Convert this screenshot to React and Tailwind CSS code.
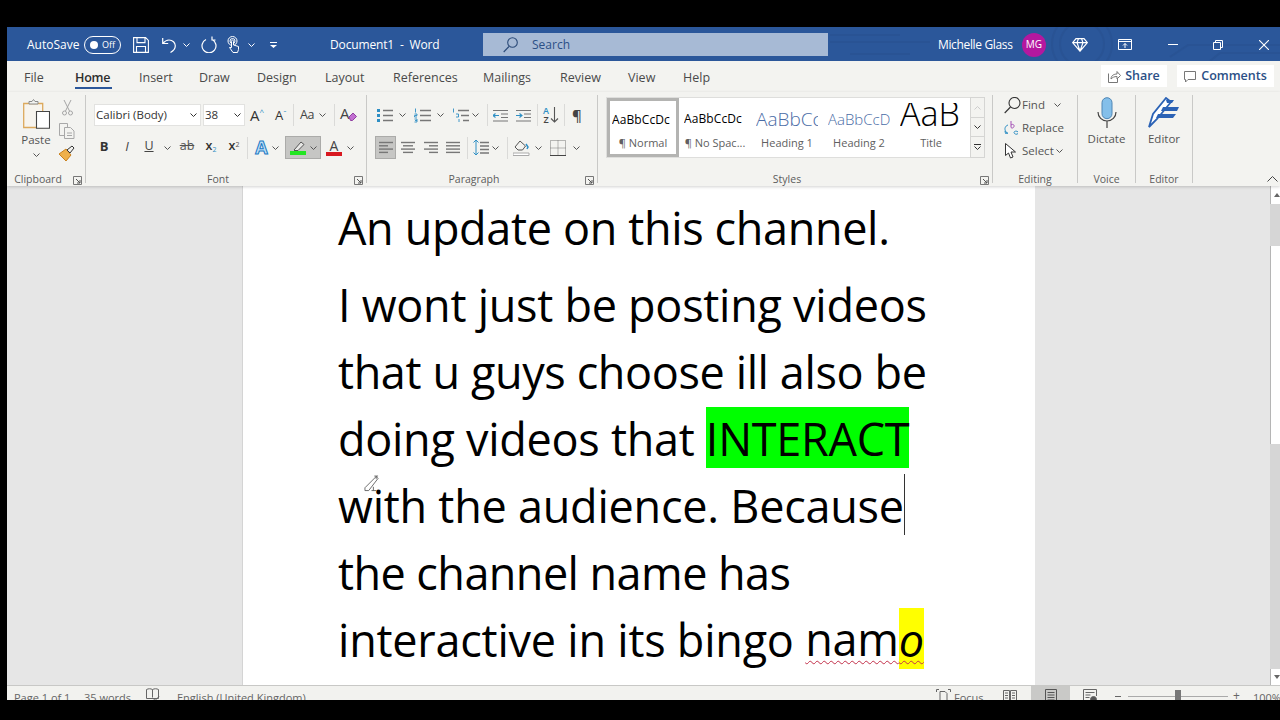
import React from 'react';

const Chev = ({ c = '#555', className = '' }) => (
  <svg width="7" height="4" viewBox="0 0 7 4" className={'shrink-0 ' + className}><path d="M.5.5 3.5 3.5 6.5.5" fill="none" stroke={c} /></svg>
);
const Sep = ({ className = '' }) => <div className={'w-px h-[22px] bg-[#dadad8] shrink-0 ' + className} />;
const Launcher = () => (
  <svg width="9" height="9" viewBox="0 0 9 9"><path d="M.5 8.5v-8h8v8z" fill="none" stroke="#777" /><path d="M3 3l4 4M7 4v3H4" fill="none" stroke="#555" /></svg>
);
const Lines = ({ rows, w = 14, c = '#777' }) => (
  <svg width={w} height="15" viewBox={`0 0 ${w} 15`} className="shrink-0">
    {rows.map(([a, b], i) => <path key={i} d={`M${a} ${2.5 + i * 3.3}H${b}`} stroke={c} strokeWidth="1.4" />)}
  </svg>
);
const Bullets = () => (
  <svg width="16" height="15" viewBox="0 0 16 15" className="shrink-0">
    <path d="M6 2.5h10M6 7.5h10M6 12.5h10" stroke="#777" strokeWidth="1.3" />
    <path d="M0 1h3v3H0zM0 6h3v3H0zM0 11h3v3H0z" fill="#2f8fc4" />
  </svg>
);
const Numbers = () => (
  <svg width="17" height="15" viewBox="0 0 17 15" className="shrink-0">
    <path d="M6 2.5h11M6 7.5h11M6 12.5h11" stroke="#777" strokeWidth="1.3" />
    <path d="M1.5 0.500v4M0.500 6h2.500v1.500h-2.500v1.500h2.500M0.500 11h2.500v3h-2.500M1 12.500h2" fill="none" stroke="#2f8fc4" strokeWidth=".9" />
  </svg>
);
const Multi = () => (
  <svg width="17" height="15" viewBox="0 0 17 15" className="shrink-0">
    <path d="M6 2.500h11M9 7.500h8M11 12.500h6" stroke="#777" strokeWidth="1.3" />
    <path d="M1.500.5v4M4 6h2.500v3H4M7 11v3" fill="none" stroke="#2f8fc4" strokeWidth=".9" />
  </svg>
);
const Indent = ({ flip }) => (
  <svg width="15" height="15" viewBox="0 0 15 15" className="shrink-0">
    <path d="M0 2.500h15M8 6h7M8 9.500h7M0 13h15" stroke="#777" strokeWidth="1.2" />
    <path d={flip ? 'M0 7.500h6M3.500 5.500l2.500 2-2.500 2' : 'M6 7.500H0M2.500 5.500l-2.500 2 2.500 2'} fill="none" stroke="#2f8fc4" strokeWidth="1.1" />
  </svg>
);

function TitleBar() {
  return (
    <div className="relative h-[34px] shrink-0 bg-[#2b579a] flex items-center pt-[1px] text-white text-[12px] overflow-hidden">
      <svg width="450" height="34" viewBox="0 0 450 34" className="absolute right-0 top-0" fill="none" stroke="#295394" strokeWidth="2">
        <path d="M0 15h100M0 8h70M20 27h60" />
        <circle cx="252" cy="17" r="22" />
        <circle cx="252" cy="17" r="30" />
        <path d="M340 30l18-12h92M380 34l10-8h60" />
      </svg>
      <span className="relative ml-[20px] w-[57px]">AutoSave</span>
      <div className="relative w-[37px] h-[18px] rounded-full border border-white flex items-center pl-[5px] gap-[4px] shrink-0">
        <span className="w-[8px] h-[8px] rounded-full bg-white shrink-0" />
        <span className="text-[9px] leading-none">Off</span>
      </div>
      <svg width="16" height="16" viewBox="0 0 16 16" className="relative ml-[12px] shrink-0" fill="none" stroke="#fff" strokeWidth="1.1">
        <path d="M.6.6h12l2.800 2.800v12H.6zM4 .6v5h8v-5M3.500 15.400V9.500h9v5.900" />
      </svg>
      <svg width="14" height="16" viewBox="0 0 14 16" className="relative ml-[13px] shrink-0" fill="none" stroke="#fff" strokeWidth="1.2">
        <path d="M.7 1v5.500h5.500M.9 6.300C3 3.800 5 3 7 3c3.700 0 6.300 2.800 6.300 5.800 0 2.700-1.700 5-4.800 6.700" />
      </svg>
      <Chev c="#fff" className="relative ml-[7px]" />
      <svg width="16" height="17" viewBox="0 0 16 17" className="relative ml-[11px] shrink-0" fill="none" stroke="#fff" strokeWidth="1.2">
        <path d="M5 3.500A7 7 0 1 0 11 3.500M11 .5v3.500h3.500" />
      </svg>
      <svg width="14" height="17" viewBox="0 0 14 17" className="relative ml-[10px] shrink-0" fill="none" stroke="#fff" strokeWidth="1">
        <circle cx="5.500" cy="5" r="4.500" />
        <circle cx="5.500" cy="5" r="2.500" />
        <path d="M4.500 5.500c0-2 2-2 2 0v3.500l5 1.500v3l-1 3H6L2.500 11.500l2 0z" fill="#2b579a" />
      </svg>
      <Chev c="#fff" className="relative ml-[7px]" />
      <svg width="7" height="6" viewBox="0 0 7 6" className="relative ml-[15px] shrink-0" fill="#fff"><path d="M0 0h7v1H0zM0 3h7L3.500 6z" /></svg>
      <span className="relative ml-[53px] w-[153px] whitespace-pre text-[12px] tracking-[-0.15px]">Document1  -  Word</span>
      <div className="relative w-[345px] h-[23px] bg-[#a7bad5] flex items-center shrink-0 text-[#2b4f86]">
        <svg width="15" height="16" viewBox="0 0 15 16" className="ml-[20px]" fill="none" stroke="#2b4a78" strokeWidth="1.1"><circle cx="9.500" cy="5.500" r="4.800" /><path d="M6 9.500.7 15" /></svg>
        <span className="ml-[14px] text-[12px]">Search</span>
      </div>
      <span className="relative ml-[110px] w-[73px] whitespace-nowrap text-[12px] tracking-[-0.35px]">Michelle Glass</span>
      <div className="relative ml-[11px] w-[24px] h-[24px] rounded-full bg-[#b4189f] flex items-center justify-center text-[10px] shrink-0">MG</div>
      <svg width="16" height="14" viewBox="0 0 16 14" className="relative ml-[26px] shrink-0" fill="none" stroke="#fff" strokeWidth="1.200"><path d="M4 .6h8l3.400 4L8 13.200.6 4.600zM.6 4.600h14.800M5 4.600 8 13l3-8.400M5 4.600 6.500.6M11 4.600 9.500.6" /></svg>
      <svg width="14" height="11" viewBox="0 0 14 11" className="relative ml-[30px] shrink-0" fill="none" stroke="#fff"><path d="M.5.500h13v10H.5zM.5 2.500h13M7 9V4.500M5 6.500l2-2 2 2" /></svg>
      <div className="relative ml-[36px] w-[10px] h-px bg-white shrink-0" />
      <svg width="10" height="10" viewBox="0 0 10 10" className="relative ml-[35px] shrink-0" fill="none" stroke="#fff"><path d="M.5 2.500h7v7h-7zM2.500 2.500v-2h7v7h-2" /></svg>
      <svg width="10" height="10" viewBox="0 0 10 10" className="relative ml-[36px] shrink-0" fill="none" stroke="#fff" strokeWidth="1.100"><path d="M0 0l10 10M10 0 0 10" /></svg>
    </div>
  );
}

function Tabs() {
  const t = 'text-[12.5px] leading-[18px] text-[#4a4a4a] shrink-0';
  return (
    <div className="h-[31px] shrink-0 bg-[#f3f3f0] flex items-start pl-[17px] pt-[8px]">
      <span className={t + ' w-[51px]'}>File</span>
      <span className={t + ' w-[64px]'}><span className="inline-block w-[37px] border-b-2 border-[#2b579a] text-[#2d2d2d] font-semibold text-[12.5px] tracking-[-0.2px]">Home</span></span>
      <span className={t + ' w-[60px]'}>Insert</span>
      <span className={t + ' w-[58px]'}>Draw</span>
      <span className={t + ' w-[68px]'}>Design</span>
      <span className={t + ' w-[68px]'}>Layout</span>
      <span className={t + ' w-[90px]'}>References</span>
      <span className={t + ' w-[77px]'}>Mailings</span>
      <span className={t + ' w-[68px]'}>Review</span>
      <span className={t + ' w-[55px]'}>View</span>
      <span className={t}>Help</span>
      <div className="ml-auto -mt-[4px] pt-[1px] h-[22px] w-[66px] bg-white flex items-center justify-center gap-[4px] text-[#2b4f86] text-[12.5px] font-semibold shrink-0">
        <svg width="13" height="13" viewBox="0 0 13 13" fill="none" stroke="#777"><path d="M.5 3.500v9h9v-4M3 9c0-3.500 3-5 6-5V1.500L12.500 5.500 9 9V6.500c-3 0-4.500 1-6 2.500z" /></svg>
        Share
      </div>
      <div className="ml-[10px] mr-[6px] -mt-[4px] pt-[1px] h-[22px] w-[97px] bg-white flex items-center justify-center gap-[5px] text-[#2b4f86] text-[12.5px] font-semibold shrink-0">
        <svg width="12" height="12" viewBox="0 0 12 12" fill="none" stroke="#777"><path d="M.5.500h11v8H4L1.500 11V8.500h-1z" /></svg>
        Comments
      </div>
    </div>
  );
}

function Group({ label, launcher, className = '', children }) {
  return (
    <div className={'h-[88px] shrink-0 border-r border-[#c9c9c7] ' + className}>
      <div className="h-[76px] flow-root">{children}</div>
      <div className="h-[18px] flex items-center text-[10.5px] text-[#5c5c5c]">
        <div className="flex-1 text-center">{label}</div>
        {launcher && <div className="w-[16px] flex justify-center"><Launcher /></div>}
      </div>
    </div>
  );
}

function Clipboard() {
  return (
    <Group label="Clipboard" launcher className="w-[79px]">
      <div className="flex pl-[6px]">
        <div className="w-[46px] flex flex-col items-center pt-[4px]">
          <svg width="27" height="30" viewBox="0 0 27 30">
            <path d="M.7 4.500h19v24H.7z" fill="#f7f4ee" stroke="#dca95c" strokeWidth="1.300" />
            <path d="M6 5V2.500h3l1.500-2 1.500 2h3V5z" fill="#f3f3f0" stroke="#8a8a8a" />
            <path d="M13.500 12.500h13v16.800h-13z" fill="#fff" stroke="#444" strokeWidth="1.100" />
          </svg>
          <span className="mt-[3px] text-[11.5px] leading-[16px] text-[#555]">Paste</span>
          <Chev className="mt-[5px]" />
        </div>
        <div className="w-[16px] flex flex-col items-center pt-[5px]">
          <svg width="11" height="16" viewBox="0 0 11 16" fill="none" stroke="#a5a5a5"><path d="M2 0l5.500 11M9 0 3.500 11" /><circle cx="2.500" cy="13" r="2" /><circle cx="8.500" cy="13" r="2" /></svg>
          <svg width="16" height="16" viewBox="0 0 16 16" className="mt-[7px]" fill="none" stroke="#a8a8a8"><path d="M.5.5h8v12h-8z" /><path d="M5.500 4.500h6l3.500 3.500v7.500H5.500z" fill="#f3f3f0" /><path d="M8 10h5M8 12.500h5" /></svg>
          <svg width="16" height="17" viewBox="0 0 16 17" className="mt-[6px]">
            <path d="M0 9l7-5 5 6-5 6z" fill="#efb04a" stroke="#c9801d" />
            <path d="M8 5l5-4 2 2-4 5z" fill="#f3f3f0" stroke="#333" />
          </svg>
        </div>
      </div>
    </Group>
  );
}

function Font() {
  return (
    <Group label="Font" launcher className="w-[281px]">
      <div className="flex items-center h-[22px] mt-[9px] pl-[8px]">
        <div className="w-[107px] h-[22px] bg-white border border-[#e2e2e0] flex items-center justify-between pl-[1px] pr-[3px] shrink-0 text-[11.5px] text-[#333]">
          Calibri (Body)<Chev c="#333" />
        </div>
        <div className="ml-[2px] w-[42px] h-[22px] bg-white border border-[#e2e2e0] flex items-center justify-between pl-[1px] pr-[3px] shrink-0 text-[11.5px] text-[#333]">
          38<Chev c="#333" />
        </div>
        <div className="ml-[5px] w-[16px] shrink-0 flex items-start text-[15px] leading-none text-[#333]">A<span className="text-[#2f8fc4] text-[8px]">^</span></div>
        <div className="ml-[9px] w-[16px] shrink-0 flex items-start text-[13px] leading-none text-[#333]">A<span className="text-[#2f8fc4] text-[8px]">ˇ</span></div>
        <Sep className="ml-[2px]" />
        <span className="ml-[6px] w-[15px] shrink-0 text-[12.500px] text-[#444] whitespace-nowrap tracking-[-0.5px]">Aa</span>
        <Chev className="ml-[4px]" />
        <Sep className="ml-[8px]" />
        <div className="ml-[5px] w-[17px] h-[18px] shrink-0 flex flex-col">
          <span className="text-[15px] leading-[15px] text-[#444]">A</span>
          <svg width="17" height="18" viewBox="0 0 17 18" className="-mt-[15px]"><path d="M9 11l4-4 3.500 3.500-4 4h-2z" fill="#c26fd1" stroke="#8f3fa0" /></svg>
        </div>
      </div>
      <div className="flex items-center h-[23px] mt-[10px] pl-[8px]">
        <span className="w-[20px] mb-[2px] shrink-0 text-center text-[13px] font-bold text-[#333]">B</span>
        <span className="ml-[3px] mb-[2px] w-[20px] shrink-0 text-center text-[13px] italic text-[#444]">I</span>
        <span className="ml-[2px] mb-[2px] w-[20px] shrink-0 text-center text-[12.500px] underline text-[#444]">U</span>
        <Chev className="ml-[5px]" />
        <span className="ml-[6px] mb-[2px] w-[20px] shrink-0 text-center text-[12.500px] line-through text-[#555]">ab</span>
        <span className="ml-[4px] mb-[2px] w-[20px] shrink-0 text-center text-[12.500px] font-semibold text-[#333] whitespace-nowrap">x<sub className="text-[7px] text-[#2f8fc4] font-normal">2</sub></span>
        <span className="ml-[3px] mb-[2px] w-[20px] shrink-0 text-center text-[12.500px] font-semibold text-[#333] whitespace-nowrap">x<sup className="text-[7px] text-[#555] font-normal">2</sup></span>
        <Sep className="ml-[3px]" />
        <span className="ml-[5px] mb-[2px] w-[17px] shrink-0 text-center text-[18px] leading-none font-bold text-[#bfe1f7] [-webkit-text-stroke:1px_#2179c4]">A</span>
        <Chev className="ml-[2px]" />
        <div className="ml-[6px] w-[36px] h-[23px] bg-[#c6c6c4] border border-[#ababa9] flex items-center shrink-0">
          <div className="ml-[4px] w-[16px] flex flex-col items-center">
            <svg width="14" height="11" viewBox="0 0 14 11"><path d="M3 10 10 2l3 2.500-6 6H3" fill="#e8e8e6" stroke="#555" /></svg>
            <div className="w-[16px] h-[4px] bg-[#22e622]" />
          </div>
          <Chev className="ml-[4px]" />
        </div>
        <div className="ml-[5px] w-[16px] shrink-0 flex flex-col items-center">
          <span className="text-[14px] leading-[13px] text-[#444]">A</span>
          <div className="w-[16px] h-[4px] bg-[#d81820]" />
        </div>
        <Chev className="ml-[5px]" />
      </div>
    </Group>
  );
}

function Paragraph() {
  const L = [[0, 14], [0, 9], [0, 14], [0, 9]];
  const C = [[0, 14], [2, 12], [0, 14], [2, 12]];
  const R = [[0, 14], [5, 14], [0, 14], [5, 14]];
  const J = [[0, 14], [0, 14], [0, 14], [0, 14]];
  return (
    <Group label="Paragraph" launcher className="w-[231px]">
      <div className="flex items-center h-[22px] mt-[9px] pl-[10px]">
        <Bullets /><Chev className="ml-[6px]" />
        <div className="ml-[8px] shrink-0"><Numbers /></div><Chev className="ml-[6px]" />
        <div className="ml-[8px] shrink-0"><Multi /></div><Chev className="ml-[3px]" />
        <Sep className="ml-[8px]" />
        <div className="ml-[5px] shrink-0"><Indent /></div>
        <div className="ml-[8px] shrink-0"><Indent flip /></div>
        <Sep className="ml-[6px]" />
        <div className="ml-[4px] w-[17px] shrink-0 flex items-center">
          <span className="text-[9px] leading-[9px] font-semibold w-[8px] text-center"><span className="text-[#2f8fc4]">A</span><br /><span className="text-[#444]">Z</span></span>
          <svg width="9" height="16" viewBox="0 0 9 16" fill="none" stroke="#555" strokeWidth="1.100"><path d="M4.500 0v15M1 11.500l3.500 3.500 3.500-3.500" /></svg>
        </div>
        <Sep className="ml-[5px]" />
        <span className="ml-[7px] w-[12px] shrink-0 text-[15px] leading-none text-[#444] font-semibold">¶</span>
      </div>
      <div className="flex items-center h-[23px] mt-[10px] pl-[8px]">
        <div className="w-[21px] h-[23px] bg-[#c6c6c4] border border-[#ababa9] flex items-center justify-center shrink-0"><Lines rows={L} /></div>
        <div className="ml-[5px] shrink-0"><Lines rows={C} /></div>
        <div className="ml-[9px] shrink-0"><Lines rows={R} /></div>
        <div className="ml-[8px] shrink-0"><Lines rows={J} /></div>
        <Sep className="ml-[7px]" />
        <svg width="16" height="15" viewBox="0 0 16 15" className="ml-[5px] shrink-0" fill="none">
          <path d="M7 2.500h9M7 6h9M7 9.500h9M7 13h9" stroke="#777" strokeWidth="1.300" />
          <path d="M3 0v15M.5 2.500 3 0l2.500 2.500M.5 12.500 3 15l2.500-2.500" stroke="#2f8fc4" />
        </svg>
        <Chev className="ml-[3px]" />
        <Sep className="ml-[8px]" />
        <svg width="17" height="16" viewBox="0 0 17 16" className="ml-[5px] shrink-0" fill="none">
          <path d="M2 7 7 1l5.500 5-3 4H5z" stroke="#555" />
          <path d="M13 4l2 3-1 2" stroke="#2f8fc4" strokeWidth="1.500" />
          <path d="M0 13h16v2.500H0z" fill="#fff" stroke="#aaa" />
        </svg>
        <Chev className="ml-[5px]" />
        <svg width="16" height="16" viewBox="0 0 16 16" className="ml-[8px] shrink-0" fill="none" stroke="#777" strokeDasharray="1 1">
          <path d="M.5.5h15v15H.5zM8 .5v15M.5 8h15" />
          <path d="M0 15.500h16" stroke="#444" strokeDasharray="none" />
        </svg>
        <Chev className="ml-[7px]" />
      </div>
    </Group>
  );
}

function StyleCell({ children, label, selected, labelClass = '' }) {
  return (
    <div className={'w-[72px] shrink-0 flex flex-col items-center ' + (selected ? 'h-[59px] border-[3px] border-[#b4b4b2]' : 'h-[57px]')}>
      <div className={'w-[62px] overflow-hidden flex items-center whitespace-nowrap ' + (selected ? 'mt-[2px] h-[33px]' : 'mt-[4px] h-[34px]')}>{children}</div>
      <span className={'text-[11px] leading-[14px] text-[#606060] whitespace-nowrap ' + labelClass}>{label}</span>
    </div>
  );
}

function Styles() {
  return (
    <Group label="Styles" launcher className="w-[395px]">
      <div className="flex pl-[8px] pt-[2px]">
        <div className="w-[363px] h-[59px] bg-white border-y border-l border-[#dededc] flex items-start shrink-0 box-content">
          <StyleCell selected label="¶ Normal"><span className="text-[12px] text-black tracking-[0.1px]">AaBbCcDc</span></StyleCell>
          <StyleCell label="¶ No Spac..."><span className="text-[12px] text-black tracking-[0.1px]">AaBbCcDc</span></StyleCell>
          <StyleCell label="Heading 1"><span className="text-[19px] font-light text-[#4a6ca6]">AaBbCc</span></StyleCell>
          <StyleCell label="Heading 2"><span className="text-[15px] font-light text-[#4a6ca6]">AaBbCcD</span></StyleCell>
          <div className="w-[72px] shrink-0 h-[57px] flex flex-col items-center">
            <div className="mt-[5px] h-[25px] w-[62px] overflow-hidden">
              <div className="-mt-[11px] text-[34px] leading-[42px] font-light text-black whitespace-nowrap">AaB</div>
            </div>
            <span className="text-[11px] leading-[14px] text-[#606060] mt-[8px]">Title</span>
          </div>
        </div>
        <div className="w-[15px] h-[61px] flex flex-col border border-[#d5d5d3] shrink-0">
          <div className="h-[20px] flex items-center justify-center border-b border-[#d5d5d3]"><Chev c="#ccc" className="rotate-180" /></div>
          <div className="h-[19px] flex items-center justify-center border-b border-[#d5d5d3]"><Chev c="#333" /></div>
          <div className="flex-1 flex flex-col items-center justify-center gap-[1px]"><div className="w-[7px] h-px bg-[#333]" /><Chev c="#333" /></div>
        </div>
      </div>
    </Group>
  );
}

function Editing() {
  const t = 'text-[11.500px] text-[#555] leading-none';
  return (
    <Group label="Editing" className="w-[85px]">
      <div className="flex items-center h-[20px] pl-[11px]">
        <svg width="17" height="17" viewBox="0 0 17 17" className="shrink-0" fill="none" stroke="#333" strokeWidth="1.100"><circle cx="10.500" cy="6" r="5.500" /><path d="M6.500 10 .7 16" /></svg>
        <span className={t + ' ml-[1px] w-[32px]'}>Find</span><Chev />
      </div>
      <div className="flex items-center h-[22px] mt-[2px] pl-[10px]">
        <div className="w-[16px] h-[18px] shrink-0 flex items-center">
          <svg width="16" height="16" viewBox="0 0 16 16" fill="none"><path d="M5 5C2 6 1 9 3 12l2 1.500M2 11l.5 2.500L5 13" stroke="#2f8fc4" /><path d="M8 1v6.500M8 5c2-1.500 3.500 0 3 1.500s-2 2-3 1" stroke="#a34fb5" /><path d="M15 12c-1-1.500-4-1-4 .5s3 2.500 4 1" stroke="#2f8fc4" /></svg>
        </div>
        <span className={t + ' ml-[3px]'}>Replace</span>
      </div>
      <div className="flex items-center h-[22px] mt-[1px] pl-[12px]">
        <svg width="12" height="16" viewBox="0 0 12 16" className="shrink-0" fill="#fff" stroke="#333"><path d="M.5.500v12l3-2.500 2 5 2.500-1-2-5h4.500z" /></svg>
        <span className={t + ' ml-[5px] w-[34px]'}>Select</span><Chev />
      </div>
    </Group>
  );
}

function Big({ label, text, icon, w }) {
  return (
    <Group label={label} className={w}>
      <div className="flex flex-col items-center pt-[2px]">
        {icon}
        <span className="mt-[3px] text-[11.500px] leading-[16px] text-[#555]">{text}</span>
      </div>
    </Group>
  );
}

function Ribbon() {
  return (
    <div className="relative z-10 h-[94px] shrink-0 bg-[#f3f3f0] flex pt-[3px] shadow-[0_1px_3px_rgba(0,0,0,0.18)]">
      <Clipboard />
      <Font />
      <Paragraph />
      <Styles />
      <Editing />
      <Big label="Voice" text="Dictate" w="w-[58px]" icon={
        <svg width="20" height="31" viewBox="0 0 20 31" fill="none">
          <rect x="5" y=".7" width="10" height="21" rx="5" fill="#84bfea" stroke="#4f86b5" />
          <path d="M1 15c0 5 4 9 9 9s9-4 9-9M10 24v7" stroke="#444" strokeWidth="1.200" />
        </svg>
      } />
      <Big label="Editor" text="Editor" w="w-[57px]" icon={
        <svg width="32" height="31" viewBox="0 0 32 31" fill="none">
          <path d="M1 30 5 17 18 1l5 4-14 17z" fill="#fff" stroke="#2b62b5" strokeWidth="1.800" />
          <path d="M15 10h16l-2 4H13zM10 17h18l-3 4H8zM18 3h8l-2 3h-5z" fill="#2b62b5" />
        </svg>
      } />
      <div className="flex-1 h-[88px] flex items-end justify-end pr-[2px] pb-[1px]">
        <svg width="11" height="6" viewBox="0 0 11 6" fill="none" stroke="#444"><path d="M.5 5.500l5-5 5 5" /></svg>
      </div>
    </div>
  );
}

const T = ({ children }) => <span className="relative top-[1px]">{children}</span>;

function Doc() {
  const line = 'block whitespace-nowrap h-[67px]';
  return (
    <div className="h-[499px] shrink-0 flex bg-[#e6e6e6] overflow-hidden">
      <div className="w-[236px] shrink-0 border-r border-[#d4d4d4]" />
      <div className="relative w-[792px] shrink-0 bg-white pl-[95px] pt-[7px] text-black text-[45px] leading-[67px] [font-family:'Open_Sans',sans-serif]">
        <p className={line + ' tracking-[-0.35px]'}><T>An update on this channel.</T></p>
        <p className={line + ' mt-[10px] tracking-[-0.27px]'}><T>I wont just be posting videos</T></p>
        <p className={line + ' tracking-[-0.39px]'}><T>that u guys choose ill also be</T></p>
        <p className={line + ' tracking-[-0.28px]'}><T>doing videos that </T><span className="bg-[#00ff00]"><T>INTERACT</T></span></p>
        <p className={line + ' tracking-[-0.24px]'}><T>with the audience. </T><span className="border-r border-[#333]"><T>Because</T></span></p>
        <p className={line + ' tracking-[-0.56px]'}><T>the channel name has</T></p>
        <p className={line + ' tracking-[-0.23px]'}><T>interactive in its bingo </T><span className="underline decoration-wavy decoration-[#c2304a] decoration-1 underline-offset-[4px]">nam<span className="italic bg-[#ffff00]"><T>o</T></span></span></p>
        <svg width="15" height="18" viewBox="0 0 16 18" className="absolute left-[121px] top-[289px]" fill="#fff" stroke="#555" strokeWidth=".9">
          <path d="M13 1l2 2-10 13H1v-3z" />
          <path d="M11 .5h4M13 .5v3M8 16h5M10 12v4" fill="none" />
        </svg>
      </div>
      <div className="w-[235px] shrink-0" />
      <div className="w-[10px] shrink-0 flex flex-col bg-[#d6d6d6]">
        <div className="h-[18px] bg-white border-l border-[#b5b5b5] flex items-center justify-end shrink-0">
          <svg width="6" height="4" viewBox="0 0 6 4" fill="#666"><path d="M0 4l3-4 3 4z" /></svg>
        </div>
        <div className="h-[42px] shrink-0" />
        <div className="h-[198px] shrink-0 bg-white border-l border-[#b5b5b5]" />
        <div className="flex-1" />
        <div className="h-[16px] bg-white border-l border-[#b5b5b5] flex items-center justify-end shrink-0">
          <svg width="6" height="4" viewBox="0 0 6 4" fill="#666"><path d="M0 0l3 4 3-4z" /></svg>
        </div>
      </div>
    </div>
  );
}

function Status() {
  const t = 'text-[11px] leading-[24px] text-[#666] whitespace-nowrap shrink-0';
  return (
    <div className="h-[22px] shrink-0 bg-[#f2f2ef] border-t border-[#c8c8c6] flex items-start">
      <span className={t + ' ml-[7px] w-[70px]'}>Page 1 of 1</span>
      <span className={t + ' w-[62px]'}>35 words</span>
      <svg width="14" height="14" viewBox="0 0 14 14" className="mt-[2px] shrink-0" fill="none" stroke="#666"><path d="M.5 1.500c2-1 4-1 6 0 2-1 4-1 6 0v9h-12zM6.500 1.500v8M7 10l2 2.500 4-4" /></svg>
      <span className={t + ' ml-[17px]'}>English (United Kingdom)</span>
      <div className="ml-auto flex items-start shrink-0">
        <svg width="15" height="15" viewBox="0 0 15 15" className="mt-[3px] shrink-0" fill="none" stroke="#666"><path d="M.5 3V.5H3M12 .5h2.500V3M4 14V2.500h5l2 2V14z" /></svg>
        <span className={t + ' ml-[3px] w-[49px]'}>Focus</span>
        <svg width="14" height="14" viewBox="0 0 14 14" className="mt-[3px] shrink-0" fill="none" stroke="#666"><path d="M.5 1.500h6v11h-6zM7.500 1.500h6v11h-6zM2 4h3M2 6.500h3M2 9h3M9 4h3M9 6.500h3M9 9h3" /></svg>
        <div className="ml-[14px] w-[39px] h-[22px] bg-[#c9c9c7] flex justify-center pt-[3px] shrink-0">
          <svg width="12" height="14" viewBox="0 0 12 14" fill="none" stroke="#555"><path d="M.5.500h11v13H.5zM2.500 3.500h7M2.500 6h7M2.500 8.500h7M2.500 11h7" /></svg>
        </div>
        <svg width="14" height="14" viewBox="0 0 14 14" className="ml-[13px] mt-[3px] shrink-0" fill="none" stroke="#666"><path d="M.5.500h13V7M.5.500v12h6M2.500 3.500h9M2.500 6h5M2.500 8.500h4" /><circle cx="10.500" cy="10.500" r="3" fill="#555" /></svg>
        <div className="ml-[18px] w-[6px] h-px bg-[#666] mt-[10px] shrink-0" />
        <div className="ml-[7px] w-[100px] h-[12px] flex mt-[4px] shrink-0">
          <div className="w-[47px] h-px bg-[#aaa] mt-[6px]" />
          <div className="w-[6px] h-[12px] bg-[#777]" />
          <div className="w-[47px] h-px bg-[#aaa] mt-[6px]" />
        </div>
        <span className="ml-[5px] w-[7px] text-[12px] leading-[20px] text-[#666] shrink-0">+</span>
        <span className={t + ' ml-[13px] w-[27px] overflow-hidden'}>100%</span>
      </div>
    </div>
  );
}

export default function App() {
  return (
    <div className="w-[1280px] h-[720px] bg-black pt-[27px] pl-[7px] overflow-hidden [font-family:'Open_Sans',sans-serif]">
      <div className="w-[1273px] h-[673px] flex flex-col overflow-hidden">
        <TitleBar />
        <Tabs />
        <Ribbon />
        <Doc />
        <Status />
      </div>
    </div>
  );
}
